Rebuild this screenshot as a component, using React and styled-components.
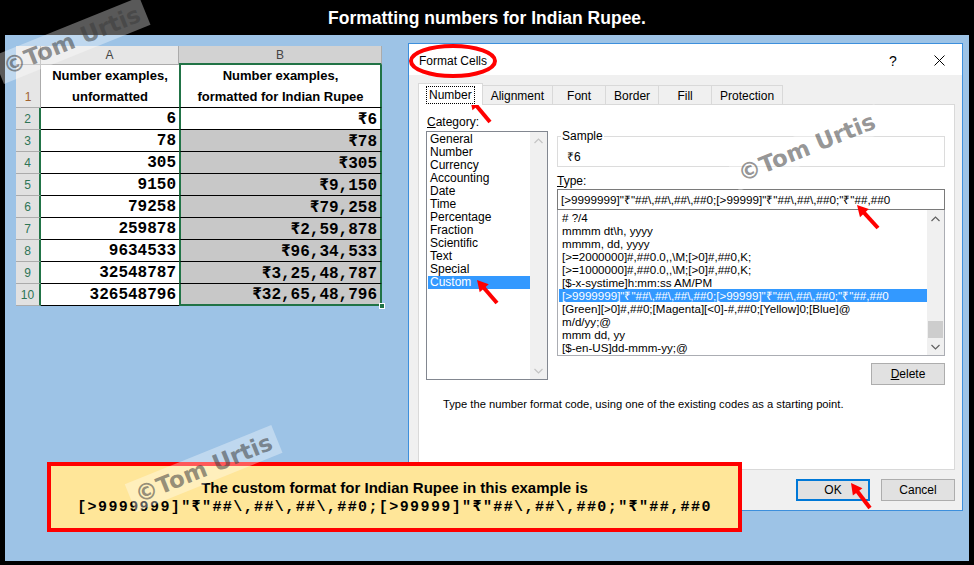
import React from "react";
import styled, { createGlobalStyle, css } from "styled-components";

const RUPEE_CODE = '[>9999999]"₹"##\\,##\\,##\\,##0;[>99999]"₹"##\\,##\\,##0;"₹"##,##0';

const unformatted = ["6", "78", "305", "9150", "79258", "259878", "9634533", "32548787", "326548796"];
const formatted = ["₹6", "₹78", "₹305", "₹9,150", "₹79,258", "₹2,59,878", "₹96,34,533", "₹3,25,48,787", "₹32,65,48,796"];

const categories = ["General", "Number", "Currency", "Accounting", "Date", "Time", "Percentage", "Fraction", "Scientific", "Text", "Special", "Custom"];

const types = [
  "# ?/4",
  "mmmm dt\\h, yyyy",
  "mmmm, dd, yyyy",
  "[>=2000000]#,##0.0,,\\M;[>0]#,##0,K;",
  "[>=1000000]#,##0.0,,\\M;[>0]#,##0,K;",
  "[$-x-systime]h:mm:ss AM/PM",
  RUPEE_CODE,
  "[Green][>0]#,##0;[Magenta][<0]-#,##0;[Yellow]0;[Blue]@",
  "m/d/yy;@",
  "mmm dd, yy",
  "[$-en-US]dd-mmm-yy;@",
];

const tabs = ["Number", "Alignment", "Font", "Border", "Fill", "Protection"];

// red call-out arrows, tail -> tip, in page coordinates
const arrows = [
  [490, 122, 470, 98],
  [497, 303, 477, 280],
  [878, 228, 857, 205],
  [870, 508, 851, 483],
];

function arrowHead(x1, y1, x2, y2) {
  const dx = x2 - x1;
  const dy = y2 - y1;
  const len = Math.hypot(dx, dy);
  const ux = dx / len;
  const uy = dy / len;
  const bx = x2 - ux * 11;
  const by = y2 - uy * 11;
  const px = -uy;
  const py = ux;
  return {
    shaft: [x1, y1, bx + ux, by + uy],
    points: `${x2},${y2} ${bx + px * 6},${by + py * 6} ${bx - px * 6},${by - py * 6}`,
  };
}

function Chevron({ up, color }) {
  return (
    <svg width="9" height="6" viewBox="0 0 9 6">
      <polyline
        points={up ? "0.5,5 4.5,1 8.5,5" : "0.5,1 4.5,5 8.5,1"}
        fill="none"
        stroke={color}
        strokeWidth="1.2"
      />
    </svg>
  );
}

function App() {
  return (
    <Frame>
      <GlobalStyle />
      <Heading>Formatting numbers for Indian Rupee.</Heading>

      <Canvas>
        <Sheet>
          <Corner />
          <ColHead>A</ColHead>
          <ColHead $sel>B</ColHead>

          <RowHead $first>1</RowHead>
          <HeadCell>
            <span>Number examples,</span>
            <span>unformatted</span>
          </HeadCell>
          <HeadCell $sel>
            <span>Number examples,</span>
            <span>formatted for Indian Rupee</span>
          </HeadCell>

          {unformatted.map((value, i) => (
            <React.Fragment key={value}>
              <RowHead>{i + 2}</RowHead>
              <Cell>{value}</Cell>
              <Cell $sel $shade={i > 0} $last={i === unformatted.length - 1}>
                {formatted[i]}
              </Cell>
            </React.Fragment>
          ))}
        </Sheet>

        <Dialog>
          <TitleBar>
            <TitleText>Format Cells</TitleText>
            <TitleButton>?</TitleButton>
            <TitleButton>
              <svg width="11" height="11" viewBox="0 0 11 11">
                <path d="M0.5 0.5 L10.5 10.5 M10.5 0.5 L0.5 10.5" stroke="#000" strokeWidth="1" />
              </svg>
            </TitleButton>
          </TitleBar>

          <Body>
            <TabRow>
              {tabs.map((t, i) => (
                <Tab key={t} $active={i === 0}>
                  {i === 0 ? <Focus>{t}</Focus> : t}
                </Tab>
              ))}
            </TabRow>

            <Panel>
              <Columns>
                <LeftCol>
                  <Label>
                    <u>C</u>ategory:
                  </Label>
                  <ListBox $h={249}>
                    <Items>
                      {categories.map((c) => (
                        <Item key={c} $sel={c === "Custom"}>
                          {c}
                        </Item>
                      ))}
                    </Items>
                    <ScrollBar>
                      <ArrowSlot>
                        <Chevron up color="#c4c4c4" />
                      </ArrowSlot>
                      <Track />
                      <ArrowSlot>
                        <Chevron color="#c4c4c4" />
                      </ArrowSlot>
                    </ScrollBar>
                  </ListBox>
                </LeftCol>

                <RightCol>
                  <Sample>
                    <Legend>Sample</Legend>
                    <SampleText>₹6</SampleText>
                  </Sample>

                  <TypeLabel>
                    <u>T</u>ype:
                  </TypeLabel>
                  <TypeInput>{RUPEE_CODE}</TypeInput>

                  <ListBox $h={146} $joined>
                    <Items>
                      {types.map((t, i) => (
                        <Item key={t} $sel={i === 6} $code>
                          {t}
                        </Item>
                      ))}
                    </Items>
                    <ScrollBar>
                      <ArrowSlot>
                        <Chevron up color="#606060" />
                      </ArrowSlot>
                      <Track>
                        <Thumb />
                      </Track>
                      <ArrowSlot>
                        <Chevron color="#606060" />
                      </ArrowSlot>
                    </ScrollBar>
                  </ListBox>

                  <ButtonRow $top={7}>
                    <Button>
                      <u>D</u>elete
                    </Button>
                  </ButtonRow>
                </RightCol>
              </Columns>

              <Hint>Type the number format code, using one of the existing codes as a starting point.</Hint>
            </Panel>

            <ButtonRow $top={9}>
              <Button $default>OK</Button>
              <Button>Cancel</Button>
            </ButtonRow>
          </Body>
        </Dialog>
      </Canvas>

      <Note>
        <NoteLine>The custom format for Indian Rupee in this example is</NoteLine>
        <NoteCode>{RUPEE_CODE}</NoteCode>
      </Note>

      <Watermark $x={4} $y={54}>©Tom Urtis</Watermark>
      <Watermark $x={739} $y={161}>©Tom Urtis</Watermark>
      <Watermark $x={136} $y={482}>©Tom Urtis</Watermark>

      <Overlay width="974" height="565" viewBox="0 0 974 565">
        <ellipse cx="453" cy="61" rx="42" ry="15" fill="none" stroke="#ff0000" strokeWidth="4" />
        {arrows.map(([x1, y1, x2, y2], i) => {
          const a = arrowHead(x1, y1, x2, y2);
          return (
            <g key={i}>
              <line
                x1={a.shaft[0]}
                y1={a.shaft[1]}
                x2={a.shaft[2]}
                y2={a.shaft[3]}
                stroke="#ff0000"
                strokeWidth="4"
              />
              <polygon points={a.points} fill="#ff0000" />
            </g>
          );
        })}
      </Overlay>
    </Frame>
  );
}

export default App;

const GlobalStyle = createGlobalStyle`
  *, *::before, *::after {
    box-sizing: border-box;
  }
  html, body {
    margin: 0;
    padding: 0;
    background: #000;
  }
`;

const Frame = styled.div`
  position: relative;
  width: 974px;
  height: 565px;
  overflow: hidden;
  background: #000;
  padding: 0 5px 4px 5px;
  display: flex;
  flex-direction: column;
  font-family: "Liberation Sans", Arial, sans-serif;
`;

const Heading = styled.h1`
  margin: 0;
  height: 35px;
  padding-top: 2px;
  line-height: 33px;
  text-align: center;
  color: #fff;
  font-size: 17.5px;
  font-weight: 700;
`;

const Canvas = styled.div`
  flex: 1;
  background: #9dc3e6;
  display: flex;
  align-items: flex-start;
  padding: 8px 0 0 11px;
`;

/* ---------- worksheet ---------- */

const Sheet = styled.div`
  margin-top: 3px;
  display: grid;
  grid-template-columns: 25px 138px 203px;
  grid-template-rows: 19px 43px repeat(9, 22px);
  background: #fff;
`;

const Corner = styled.div`
  background: #e6e6e6;
  border-right: 1px solid #ababab;
  border-bottom: 1px solid #ababab;
`;

const ColHead = styled.div`
  display: flex;
  align-items: center;
  justify-content: center;
  font-size: 12px;
  color: #444;
  background: ${(p) => (p.$sel ? "#d2d2d2" : "#e6e6e6")};
  border-right: 1px solid #ababab;
  border-bottom: ${(p) => (p.$sel ? "2px solid #217346" : "1px solid #ababab")};
`;

const RowHead = styled.div`
  display: flex;
  align-items: flex-end;
  justify-content: center;
  padding-bottom: 3px;
  font-size: 12px;
  color: ${(p) => (p.$first ? "#a0622d" : "#2e7556")};
  background: ${(p) => (p.$first ? "#e6e6e6" : "#e1e1e1")};
  border-bottom: 1px solid #ababab;
  border-right: ${(p) => (p.$first ? "1px solid #ababab" : "2px solid #217346")};
`;

const HeadCell = styled.div`
  display: flex;
  flex-direction: column;
  justify-content: flex-end;
  align-items: center;
  padding-bottom: 0;
  font-size: 13px;
  font-weight: 700;
  line-height: 21px;
  color: #000;
  white-space: nowrap;
  border-bottom: 1px solid #000;
  ${(p) =>
    p.$sel &&
    css`
      border-left: 2px solid #217346;
      border-right: 2px solid #217346;
    `}
`;

const Cell = styled.div`
  position: relative;
  display: flex;
  align-items: center;
  justify-content: flex-end;
  padding-right: 3px;
  font-family: "Liberation Mono", "DejaVu Sans Mono", monospace;
  font-size: 16px;
  font-weight: 700;
  color: #000;
  background: ${(p) => (p.$shade ? "#c8c8c8" : "#fff")};
  border-bottom: 1px solid #000;
  ${(p) =>
    p.$sel &&
    css`
      border-left: 2px solid #217346;
      border-right: 2px solid #217346;
    `}
  ${(p) =>
    p.$last &&
    css`
      border-bottom: 2px solid #217346;
      &::after {
        content: "";
        position: absolute;
        right: -5px;
        bottom: -5px;
        width: 6px;
        height: 6px;
        background: #217346;
        border: 1px solid #fff;
      }
    `}
`;

/* ---------- dialog ---------- */

const Dialog = styled.div`
  margin-left: 26px;
  width: 555px;
  height: 468px;
  border: 1px solid #3d8fdc;
  background: #f0f0f0;
  display: flex;
  flex-direction: column;
  font-size: 12px;
  color: #000;
`;

const TitleBar = styled.div`
  height: 31px;
  flex-shrink: 0;
  background: #fff;
  display: flex;
  align-items: center;
  padding: 2px 0 0 10px;
`;

const TitleText = styled.span`
  flex: 1;
`;

const TitleButton = styled.span`
  width: 46px;
  display: flex;
  justify-content: center;
  font-size: 14px;
`;

const Body = styled.div`
  flex: 1;
  padding: 8px 7px 0 9px;
  display: flex;
  flex-direction: column;
`;

const TabRow = styled.div`
  position: relative;
  z-index: 1;
  display: flex;
  align-items: flex-end;
  height: 22px;
  margin-bottom: -1px;
`;

const Tab = styled.div`
  min-width: 54px;
  height: ${(p) => (p.$active ? 22 : 20)}px;
  padding: ${(p) => (p.$active ? "0 9px" : "1px 8px 0")};
  margin-left: -1px;
  display: flex;
  align-items: center;
  justify-content: center;
  background: ${(p) => (p.$active ? "#fff" : "#f0f0f0")};
  border: 1px solid #d9d9d9;
  border-bottom: ${(p) => (p.$active ? "none" : "1px solid #d9d9d9")};
  &:first-child {
    margin-left: 0;
  }
`;

const Focus = styled.span`
  outline: 1px dotted #000;
  outline-offset: 1px;
  padding: 0 1px;
`;

const Panel = styled.div`
  height: 366px;
  flex-shrink: 0;
  background: #fff;
  border: 1px solid #d9d9d9;
  padding: 8px 7px 0 7px;
`;

const Columns = styled.div`
  display: flex;
  gap: 9px;
`;

const LeftCol = styled.div`
  width: 122px;
`;

const RightCol = styled.div`
  width: 388px;
  display: flex;
  flex-direction: column;
`;

const Label = styled.div`
  height: 18px;
  line-height: 18px;
  padding-left: 1px;
`;

const ListBox = styled.div`
  height: ${(p) => p.$h}px;
  border: 1px solid ${(p) => (p.$joined ? "#abadb3" : "#828790")};
  border-top-width: ${(p) => (p.$joined ? 0 : 1)}px;
  display: flex;
  background: #fff;
`;

const Items = styled.div`
  flex: 1;
  min-width: 0;
  padding: 1px 0 0 1px;
  overflow: hidden;
`;

const Item = styled.div`
  height: 13px;
  line-height: 13px;
  padding-left: ${(p) => (p.$code ? 3 : 2)}px;
  font-size: ${(p) => (p.$code ? 11.6 : 12)}px;
  white-space: nowrap;
  ${(p) =>
    p.$sel &&
    css`
      background: #3399ff;
      color: #fff;
    `}
`;

const ScrollBar = styled.div`
  width: 17px;
  background: #f0f0f0;
  display: flex;
  flex-direction: column;
`;

const ArrowSlot = styled.div`
  height: 17px;
  display: flex;
  align-items: center;
  justify-content: center;
`;

const Track = styled.div`
  flex: 1;
  display: flex;
  flex-direction: column;
  justify-content: flex-end;
  align-items: center;
`;

const Thumb = styled.div`
  width: 15px;
  height: 17px;
  background: #cdcdcd;
`;

const Sample = styled.fieldset`
  margin: 16px 0 0;
  padding: 6px 8px 1px 9px;
  min-width: 0;
  border: 1px solid #dcdcdc;
`;

const Legend = styled.legend`
  margin-left: -6px;
  padding: 0 1px;
  line-height: 14px;
`;

const SampleText = styled.div`
  line-height: 16px;
`;

const TypeLabel = styled.div`
  margin-top: 6px;
  line-height: 16px;
`;

const TypeInput = styled.div`
  height: 21px;
  padding: 0 3px;
  line-height: 19px;
  font-size: 11.7px;
  border: 1px solid #7a7a7a;
  white-space: nowrap;
  overflow: hidden;
`;

const ButtonRow = styled.div`
  margin-top: ${(p) => p.$top}px;
  display: flex;
  justify-content: flex-end;
  gap: 11px;
`;

const Button = styled.button`
  width: 74px;
  height: 22px;
  padding: 0;
  font-family: inherit;
  font-size: 12px;
  color: #000;
  background: #e1e1e1;
  border: 1px solid ${(p) => (p.$default ? "#0078d7" : "#adadad")};
  box-shadow: ${(p) => (p.$default ? "inset 0 0 0 1px #0078d7" : "none")};
`;

const Hint = styled.p`
  margin: 11px 0 0 17px;
  line-height: 16px;
  font-size: 11.2px;
`;

/* ---------- overlays ---------- */

const Note = styled.div`
  position: absolute;
  left: 47px;
  top: 462px;
  width: 695px;
  height: 70px;
  border: 4px solid #ff0000;
  background: #ffe699;
  padding-top: 12px;
  text-align: center;
  color: #000;
`;

const NoteLine = styled.div`
  font-size: 15px;
  font-weight: 700;
  line-height: 20px;
`;

const NoteCode = styled.div`
  font-family: "Liberation Mono", "DejaVu Sans Mono", monospace;
  font-size: 15px;
  font-weight: 700;
  letter-spacing: 1.4px;
  line-height: 20px;
`;

const Watermark = styled.div`
  position: absolute;
  left: ${(p) => p.$x}px;
  top: ${(p) => p.$y}px;
  transform-origin: 0 100%;
  transform: rotate(-22deg);
  padding: 0 6px;
  font-family: "DejaVu Sans", Verdana, sans-serif;
  font-size: 23px;
  font-weight: 700;
  line-height: 30px;
  white-space: nowrap;
  color: rgba(60, 60, 60, 0.55);
  background: rgba(255, 255, 255, 0.35);
  pointer-events: none;
`;

const Overlay = styled.svg`
  position: absolute;
  left: 0;
  top: 0;
  pointer-events: none;
`;
